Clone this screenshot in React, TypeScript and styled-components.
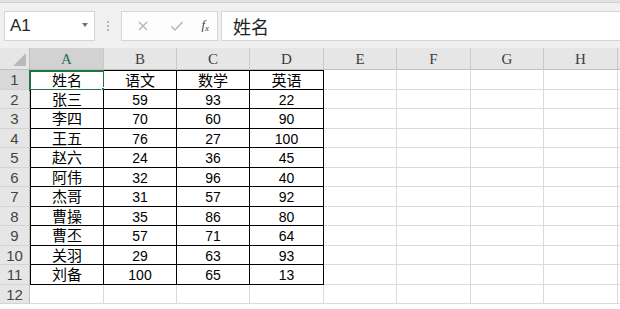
import React from 'react';
import styled, {createGlobalStyle} from 'styled-components';

const GlobalStyle = createGlobalStyle`
body {
  margin: 0;
  background: #ffffff;
  overflow: hidden;
  font-family: "Liberation Sans", "Noto Sans CJK SC", sans-serif;
}
`;

const columns = ['A', 'B', 'C', 'D', 'E', 'F', 'G', 'H'];
const colWidths = [74, 73, 73, 74, 73, 74, 73, 74];

const rows: string[][] = [
    ['姓名', '语文', '数学', '英语'],
    ['张三', '59', '93', '22'],
    ['李四', '70', '60', '90'],
    ['王五', '76', '27', '100'],
    ['赵六', '24', '36', '45'],
    ['阿伟', '32', '96', '40'],
    ['杰哥', '31', '57', '92'],
    ['曹操', '35', '86', '80'],
    ['曹丕', '57', '71', '64'],
    ['关羽', '29', '63', '93'],
    ['刘备', '100', '65', '13'],
];

const App = () => {
    const totalRows = 12;
    return (
        <Page>
            <GlobalStyle/>
            <TopStrip/>
            <Toolbar>
                <NameBox>
                    <NameText>A1</NameText>
                    <DropArrow/>
                </NameBox>
                <Grip>
                    <Dot/><Dot/><Dot/>
                </Grip>
                <ButtonGroup>
                    <BarButton>
                        <svg width="12" height="12" viewBox="0 0 12 12">
                            <path d="M2 2 L10 10 M10 2 L2 10" stroke="#b4b4b4" strokeWidth="1.3" fill="none"/>
                        </svg>
                    </BarButton>
                    <BarButton>
                        <svg width="14" height="12" viewBox="0 0 14 12">
                            <path d="M1.5 6.5 L5 10 L12.5 2" stroke="#b4b4b4" strokeWidth="1.5" fill="none"/>
                        </svg>
                    </BarButton>
                    <FxButton>f<sub>x</sub></FxButton>
                </ButtonGroup>
                <FormulaInput>姓名</FormulaInput>
            </Toolbar>
            <Sheet>
                <Corner>
                    <svg width="13" height="13" viewBox="0 0 13 13">
                        <polygon points="13,0 13,13 0,13" fill="#b9b9b9"/>
                    </svg>
                </Corner>
                {columns.map((c, i) => (
                    <ColHeader key={c} $selected={i === 0}>{c}</ColHeader>
                ))}
                <HeaderFill/>
                {Array.from({length: totalRows}).map((_, r) => (
                    <React.Fragment key={r}>
                        <RowHeader $selected={r === 0}>{r + 1}</RowHeader>
                        {columns.map((c, ci) => {
                            const inData = r < rows.length && ci < 4;
                            const value = inData ? rows[r][ci] : '';
                            return (
                                <Cell
                                    key={c}
                                    $data={inData}
                                    $first={inData && ci === 0}
                                    $top={inData && r === 0}
                                    $numeric={/^\d+$/.test(value)}
                                >
                                    {value}
                                    {r === 0 && ci === 0 && (
                                        <Selection>
                                            <Handle/>
                                        </Selection>
                                    )}
                                </Cell>
                            );
                        })}
                        <Cell $data={false} $first={false} $top={false} $numeric={false}/>
                    </React.Fragment>
                ))}
            </Sheet>
        </Page>
    );
};

export default App;

const Page = styled.div`
width: 620px;
height: 309px;
overflow: hidden;
background: #ffffff;
`;

const TopStrip = styled.div`
height: 2px;
background: #e2e2e2;
border-bottom: 1px solid #d0d0d0;
`;

const Toolbar = styled.div`
display: flex;
align-items: stretch;
height: 30px;
padding: 8px 0 7px 4px;
background: #f0f0f0;
`;

const NameBox = styled.div`
width: 91px;
box-sizing: border-box;
display: flex;
align-items: center;
justify-content: space-between;
background: #ffffff;
border: 1px solid #d6d6d6;
padding: 0 6px 0 5px;
`;

const NameText = styled.span`
font-size: 17px;
color: #262626;
`;

const DropArrow = styled.span`
width: 0;
height: 0;
border-left: 3.5px solid transparent;
border-right: 3.5px solid transparent;
border-top: 4px solid #707070;
margin-bottom: 2px;
`;

const Grip = styled.div`
width: 26px;
display: flex;
flex-direction: column;
align-items: center;
justify-content: center;
gap: 2px;
`;

const Dot = styled.span`
width: 2px;
height: 2px;
background: #b4b4b4;
`;

const ButtonGroup = styled.div`
width: 97px;
box-sizing: border-box;
display: flex;
align-items: center;
justify-content: space-between;
padding: 0 8px 0 11px;
background: #fdfdfd;
border: 1px solid #d6d6d6;
`;

const BarButton = styled.span`
width: 20px;
display: flex;
justify-content: center;
align-items: center;
`;

const FxButton = styled.span`
font-family: "Liberation Serif", serif;
font-style: italic;
font-size: 13px;
color: #444;
padding-bottom: 3px;

sub {
  font-size: 9px;
  vertical-align: -2px;
}
`;

const FormulaInput = styled.div`
flex: 1;
margin-left: 3px;
display: flex;
align-items: center;
padding-left: 11px;
background: #ffffff;
border: 1px solid #d6d6d6;
border-right: none;
font-family: "Noto Sans CJK SC", sans-serif;
font-size: 18px;
color: #222;
`;

const Sheet = styled.div`
display: grid;
grid-template-columns: 30px ${colWidths.map(w => `${w}px`).join(' ')} 20px;
grid-template-rows: 22px repeat(6, 20px 19px);
background: #f0f0f0;
`;

const HeaderCell = styled.div`
box-sizing: border-box;
background: #e6e6e6;
border-bottom: 1px solid #bfbfbf;
border-right: 1px solid #c9c9c9;
display: flex;
align-items: center;
justify-content: center;
color: #444;
`;

const Corner = styled(HeaderCell)`
align-items: flex-end;
justify-content: flex-end;
padding: 0 3px 3px 0;
border-right: 1px solid #bfbfbf;
`;

const ColHeader = styled(HeaderCell)<{ $selected: boolean }>`
font-family: "Liberation Serif", serif;
font-size: 15px;
padding-top: 2px;
background: ${p => p.$selected ? '#d2d2d2' : '#e6e6e6'};
color: ${p => p.$selected ? '#217346' : '#3c3c3c'};
`;

const HeaderFill = styled(HeaderCell)`
border-right: none;
`;

const RowHeader = styled.div<{ $selected: boolean }>`
box-sizing: border-box;
background: ${p => p.$selected ? '#d8d8d8' : '#e6e6e6'};
border-right: 1px solid #bfbfbf;
border-bottom: 1px solid #d4d4d4;
display: flex;
align-items: center;
justify-content: center;
font-size: 15px;
color: #444;
`;

const Cell = styled.div<{ $data: boolean; $first: boolean; $top: boolean; $numeric: boolean }>`
position: relative;
box-sizing: border-box;
background: #ffffff;
border-right: 1px solid ${p => p.$data ? '#000' : '#dadada'};
border-bottom: 1px solid ${p => p.$data ? '#000' : '#dadada'};
border-left: ${p => p.$first ? '1px solid #000' : 'none'};
border-top: ${p => p.$top ? '1px solid #000' : 'none'};
display: flex;
align-items: center;
justify-content: center;
padding-top: ${p => p.$numeric ? '1px' : '0'};
font-family: "Liberation Sans", "Noto Sans CJK SC", sans-serif;
font-size: ${p => p.$numeric ? '14px' : '15px'};
line-height: 1;
color: #000;
`;

const Selection = styled.div`
position: absolute;
top: -1px;
left: -2px;
right: -2px;
bottom: -2px;
border: 2px solid #217346;
pointer-events: none;
`;

const Handle = styled.div`
position: absolute;
right: -5px;
bottom: -5px;
width: 5px;
height: 5px;
background: #217346;
border: 1px solid #ffffff;
`;
